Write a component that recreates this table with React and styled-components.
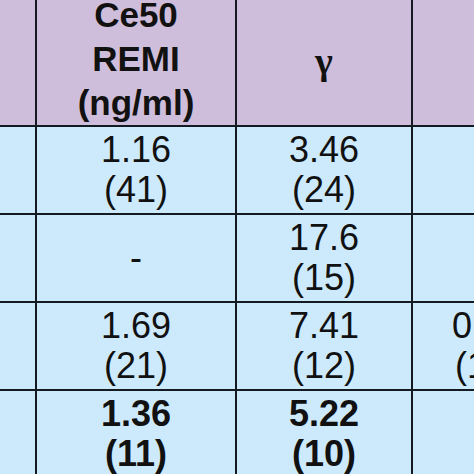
import styled, { createGlobalStyle } from "styled-components";

const GlobalStyle = createGlobalStyle`
  html, body {
    margin: 0;
    padding: 0;
    background: #cceafc;
    overflow: hidden;
  }
`;

const Viewport = styled.div`
  width: 474px;
  height: 474px;
  overflow: hidden;
`;

const Table = styled.div`
  display: grid;
  grid-template-columns: 35px 198px 174px 148px;
  grid-auto-rows: auto;
  gap: 2px;
  background: #141a22;
  margin-top: -7px;
  width: max-content;
  font-family: "Liberation Sans", Arial, sans-serif;
  color: #111;
`;

const HeadCell = styled.div`
  background: #cebedb;
  display: flex;
  flex-direction: column;
  align-items: center;
  justify-content: center;
  text-align: center;
  font-size: 35px;
  font-weight: 700;
  line-height: 44px;
  min-height: 131px;
`;

const Greek = styled.span`
  font-family: "Liberation Serif", "Times New Roman", serif;
  font-size: 38px;
  font-weight: 700;
  line-height: 1;
  margin-top: 4px;
`;

const Cell = styled.div`
  background: #cceafc;
  display: flex;
  flex-direction: column;
  align-items: center;
  justify-content: center;
  text-align: center;
  font-size: 36px;
  font-weight: ${(p) => (p.$bold ? 700 : 400)};
  line-height: 40px;
  padding: 3px 0;
  min-height: 80px;
`;

const rows = [
  { bold: false, cells: [null, ["1.16", "(41)"], ["3.46", "(24)"], null] },
  { bold: false, cells: [null, ["-"], ["17.6", "(15)"], null] },
  { bold: false, cells: [null, ["1.69", "(21)"], ["7.41", "(12)"], ["0.88", "(19)"]] },
  { bold: true, cells: [null, ["1.36", "(11)"], ["5.22", "(10)"], null] },
];

const App = () => {
  return (
    <Viewport>
      <GlobalStyle />
      <Table>
        <HeadCell />
        <HeadCell>
          <span>Ce50</span>
          <span>REMI</span>
          <span>(ng/ml)</span>
        </HeadCell>
        <HeadCell>
          <Greek>γ</Greek>
        </HeadCell>
        <HeadCell />
        {rows.map((row, i) =>
          row.cells.map((c, j) => (
            <Cell key={`${i}-${j}`} $bold={row.bold}>
              {c && c.map((line, k) => <span key={k}>{line}</span>)}
            </Cell>
          ))
        )}
      </Table>
    </Viewport>
  );
};

export default App;
